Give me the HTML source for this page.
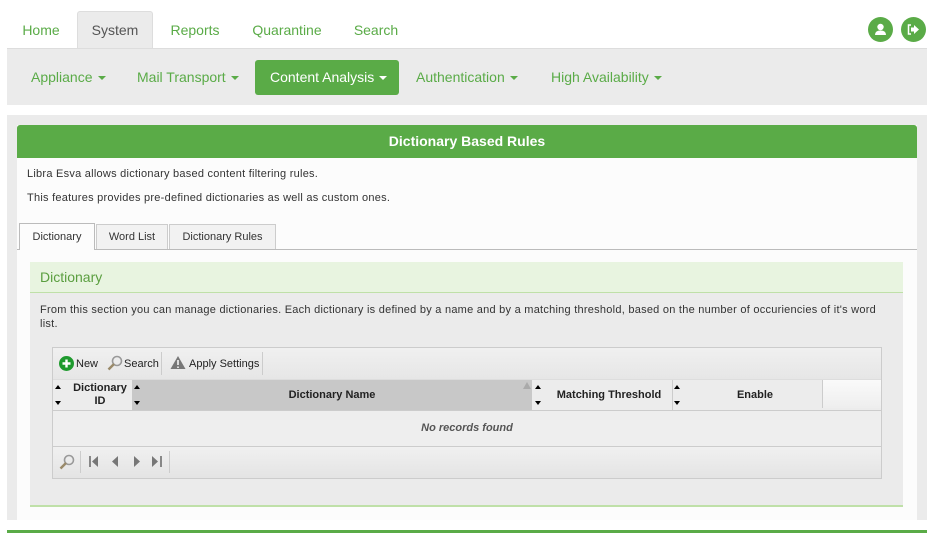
<!DOCTYPE html>
<html><head><meta charset="utf-8"><style>
*{box-sizing:border-box;margin:0;padding:0}
body{width:933px;height:543px;background:#fff;font-family:"Liberation Sans",sans-serif;position:relative;overflow:hidden;color:#333}
.a{position:absolute}
.t{position:absolute;top:12px;height:37px;line-height:37px;font-size:14px;color:#5aab47;text-align:center}
.sub{position:absolute;top:60px;height:35px;line-height:35px;font-size:14px;color:#5aab47}
.car{display:inline-block;width:0;height:0;border-left:4px solid transparent;border-right:4px solid transparent;border-top:4px solid currentColor;vertical-align:middle;margin-left:5px}
.g{font-family:"Liberation Sans",Arial,sans-serif;font-size:11px;color:#222}
.arr{position:absolute;width:0;height:0;border-left:3px solid transparent;border-right:3px solid transparent}
.up{border-bottom:4px solid #000}.dn{border-top:4px solid #000}
.ls{letter-spacing:0.25px}
</style></head><body>
<div class="t" style="left:13px;width:56px">Home</div>
<div class="a" style="left:77px;top:11px;width:76px;height:38px;background:#ebebeb;border:1px solid #ddd;border-bottom:none;border-radius:3px 3px 0 0"></div>
<div class="t" style="left:77px;width:76px;color:#555">System</div>
<div class="t" style="left:160px;width:70px">Reports</div>
<div class="t" style="left:243px;width:88px">Quarantine</div>
<div class="t" style="left:345px;width:62px">Search</div>
<div class="a" style="left:868px;top:17px;width:25px;height:25px;border-radius:50%;background:#5aab47"><svg width="25" height="25"><circle cx="12.5" cy="10" r="3.2" fill="#fff"/><path d="M7 18 Q7 13.5 12.5 13.5 Q18 13.5 18 18Z" fill="#fff"/></svg></div>
<div class="a" style="left:901px;top:17px;width:25px;height:25px;border-radius:50%;background:#5aab47"><svg width="25" height="25"><path d="M10 8H7.5V17H10" stroke="#fff" stroke-width="1.5" fill="none"/><path d="M10 10.5H13V8L18 12.5L13 17V14.5H10Z" fill="#fff"/></svg></div>
<div class="a" style="left:7px;top:48px;width:920px;height:57px;background:#ebebeb;border-top:1px solid #ddd"></div>
<div class="sub" style="left:31px">Appliance<span class="car"></span></div>
<div class="sub" style="left:137px">Mail Transport<span class="car"></span></div>
<div class="a" style="left:255px;top:60px;width:144px;height:35px;background:#5aab47;border-radius:3px"></div>
<div class="sub" style="left:270px;color:#fff">Content Analysis<span class="car"></span></div>
<div class="sub" style="left:416px">Authentication<span class="car"></span></div>
<div class="sub" style="left:551px">High Availability<span class="car"></span></div>
<div class="a" style="left:7px;top:115px;width:920px;height:405px;background:#ebebeb"></div>
<div class="a" style="left:17px;top:125px;width:900px;height:395px;background:#fcfcfc"></div>
<div class="a" style="left:17px;top:125px;width:900px;height:33px;background:#5aab47;border-radius:3px 3px 0 0;color:#fff;font-size:14px;font-weight:bold;text-align:center;line-height:33px">Dictionary Based Rules</div>
<div class="a ls" style="left:27px;top:168px;font-size:11px">Libra Esva allows dictionary based content filtering rules.</div>
<div class="a ls" style="left:27px;top:192px;font-size:11px">This features provides pre-defined dictionaries as well as custom ones.</div>
<div class="a" style="left:17px;top:249px;width:900px;height:1px;background:#bbb"></div>
<div class="a" style="left:19px;top:223px;width:76px;height:27px;background:#fcfcfc;border:1px solid #bbb;border-bottom:none;font-size:11px;text-align:center;line-height:27px">Dictionary</div>
<div class="a" style="left:96px;top:224px;width:72px;height:25px;background:#f2f2f2;border:1px solid #ccc;border-bottom:none;font-size:11px;text-align:center;line-height:25px">Word List</div>
<div class="a" style="left:169px;top:224px;width:107px;height:25px;background:#f2f2f2;border:1px solid #ccc;border-bottom:none;font-size:11px;text-align:center;line-height:25px">Dictionary Rules</div>
<div class="a" style="left:30px;top:262px;width:873px;height:31px;background:#e8f4e0;border-bottom:1px solid #bfe0a8;color:#5a9e3f;font-size:14px;line-height:30px;padding-left:10px">Dictionary</div>
<div class="a" style="left:30px;top:293px;width:873px;height:214px;background:#ebebeb;border-bottom:2px solid #bfe0a8"></div>
<div class="a ls" style="left:40px;top:303px;width:842px;font-size:11px;line-height:14px">From this section you can manage dictionaries. Each dictionary is defined by a name and by a matching threshold, based on the number of occuriencies of it's word list.</div>
<div class="a" style="left:52px;top:347px;width:830px;height:132px;border:1px solid #ccc;background:#eee"></div>
<div class="a" style="left:53px;top:348px;width:828px;height:31px;background:linear-gradient(#f0f0f0,#e6e6e6)"></div>
<div class="a" style="left:59px;top:356px;width:15px;height:15px;border-radius:50%;background:#1f9a2e"><svg width="15" height="15"><path d="M7.5 3.5V11.5M3.5 7.5H11.5" stroke="#fff" stroke-width="2.4"/></svg></div>
<div class="a g" style="left:76px;top:358px">New</div>
<svg class="a" style="left:106px;top:354px" width="18" height="18"><circle cx="11" cy="7" r="4.5" stroke="#999" stroke-width="1.6" fill="none"/><path d="M8 10L2.5 15.5" stroke="#9a8a6a" stroke-width="2.5"/></svg>
<div class="a g" style="left:124px;top:358px">Search</div>
<div class="a" style="left:161px;top:352px;width:1px;height:23px;background:#ccc"></div>
<svg class="a" style="left:170px;top:355px" width="16" height="15"><path d="M8 1L15.5 14H0.5Z" fill="#777"/><path d="M8 5V10M8 11.5V13" stroke="#fff" stroke-width="1.5"/></svg>
<div class="a g" style="left:189px;top:358px">Apply Settings</div>
<div class="a" style="left:262px;top:352px;width:1px;height:23px;background:#ccc"></div>
<div class="a" style="left:53px;top:379px;width:828px;height:32px;background:#ececec;border-top:1px solid #ddd;border-bottom:1px solid #ccc"></div>
<div class="a" style="left:132px;top:380px;width:400px;height:30px;background:#c8c8c8"></div>
<div class="a" style="left:822px;top:380px;width:59px;height:28px;background:linear-gradient(#fafafa,#eee);border-left:1px solid #ccc"></div>
<div class="a" style="left:672px;top:380px;width:1px;height:30px;background:#ccc"></div>
<div class="a g" style="left:62px;top:382px;width:76px;text-align:center;font-weight:bold;line-height:13px">Dictionary<br>ID</div>
<div class="a g" style="left:132px;top:389px;width:400px;text-align:center;font-weight:bold">Dictionary Name</div>
<div class="a g" style="left:540px;top:389px;width:138px;text-align:center;font-weight:bold">Matching Threshold</div>
<div class="a g" style="left:680px;top:389px;width:150px;text-align:center;font-weight:bold">Enable</div>
<div class="arr up" style="left:55px;top:385px"></div><div class="arr dn" style="left:55px;top:401px"></div>
<div class="arr up" style="left:134px;top:385px"></div><div class="arr dn" style="left:134px;top:401px"></div>
<div class="arr up" style="left:535px;top:385px"></div><div class="arr dn" style="left:535px;top:401px"></div>
<div class="arr up" style="left:674px;top:385px"></div><div class="arr dn" style="left:674px;top:401px"></div>
<div class="a" style="left:523px;top:382px;width:0;height:0;border-left:4px solid transparent;border-right:4px solid transparent;border-bottom:7px solid #aaa"></div>
<div class="a g" style="left:53px;top:422px;width:828px;text-align:center;font-weight:bold;font-style:italic;color:#555">No records found</div>
<div class="a" style="left:53px;top:446px;width:828px;height:32px;background:linear-gradient(#f0f0f0,#e4e4e4);border-top:1px solid #ccc"></div>
<svg class="a" style="left:58px;top:453px" width="18" height="18"><circle cx="11" cy="7" r="4.5" stroke="#999" stroke-width="1.6" fill="none"/><path d="M8 10L2.5 15.5" stroke="#9a8a6a" stroke-width="2.5"/></svg>
<div class="a" style="left:80px;top:451px;width:1px;height:22px;background:#ccc"></div>
<svg class="a" style="left:88px;top:455px" width="80" height="14"><path d="M2 1V12" stroke="#666" stroke-width="1.5"/><path d="M10 1L4 6.5L10 12Z" fill="#777"/><path d="M30 1L24 6.5L30 12Z" fill="#777"/><path d="M46 1L52 6.5L46 12Z" fill="#777"/><path d="M64 1L70 6.5L64 12Z" fill="#777"/><path d="M73 1V12" stroke="#666" stroke-width="1.5"/></svg>
<div class="a" style="left:169px;top:451px;width:1px;height:22px;background:#ccc"></div>
<div class="a" style="left:7px;top:530px;width:920px;height:3px;background:#5aab47"></div>
</body></html>
